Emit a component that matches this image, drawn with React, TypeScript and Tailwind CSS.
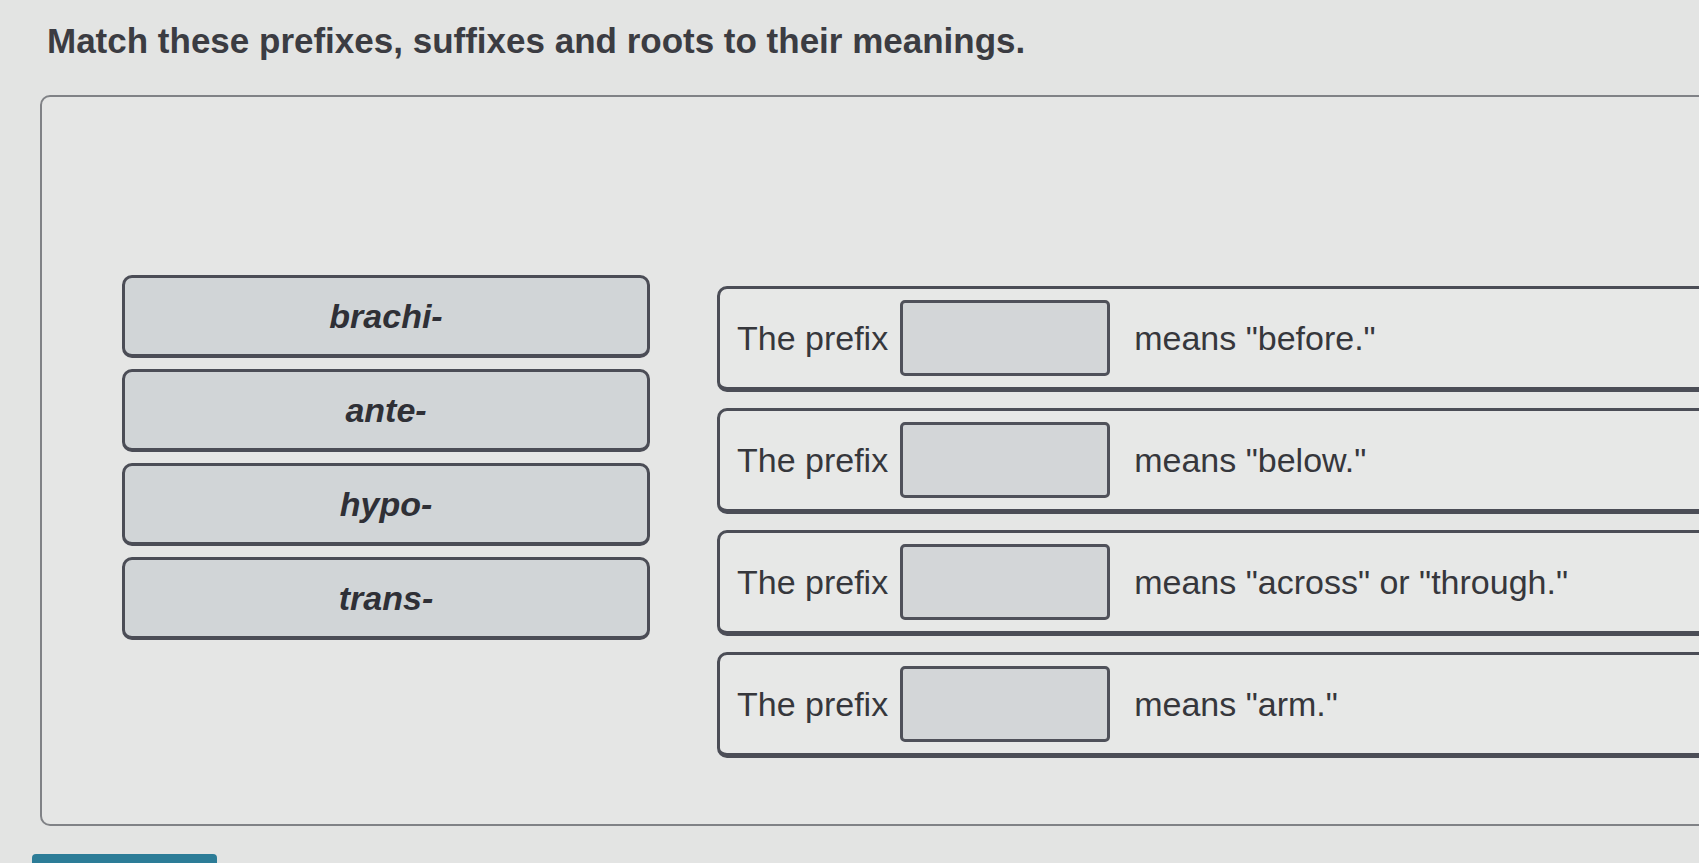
const prefixes = ["brachi-", "ante-", "hypo-", "trans-"];

const meanings = [
  'means "before."',
  'means "below."',
  'means "across" or "through."',
  'means "arm."',
];

const font = { fontFamily: '"Liberation Sans", Arial, sans-serif' };

const PrefixTile = ({ label }: { label: string }) => (
  <div className="flex h-[83px] w-[528px] items-center justify-center rounded-[10px] border-[3px] border-b-[4px] border-[#4b4d56] bg-[#d1d5d7]">
    <span className="text-[34px] font-bold italic leading-[38px] text-[#2f3036]">
      {label}
    </span>
  </div>
);

const Statement = ({ meaning }: { meaning: string }) => (
  <div className="flex h-[106px] w-[1100px] items-center rounded-[10px] border-[3px] border-b-[5px] border-[#4b4d56] bg-[#e7e8e7] pl-[17px]">
    <span className="text-[34px] leading-[38px] text-[#36373c]">The prefix</span>
    <div className="ml-[12px] h-[76px] w-[210px] rounded-[5px] border-[3px] border-[#4f515a] bg-[#d3d6d8]" />
    <span className="ml-[24px] text-[34px] leading-[38px] text-[#36373c]">
      {meaning}
    </span>
  </div>
);

export default function App() {
  return (
    <div
      className="h-[863px] w-[1699px] overflow-hidden bg-[#e3e4e3]"
      style={font}
    >
      <h1 className="pl-[47px] pt-[21px] text-[35px] font-bold leading-[39px] text-[#3b3c42]">
        Match these prefixes, suffixes and roots to their meanings.
      </h1>

      <div className="ml-[40px] mt-[35px] h-[731px] w-[1720px] rounded-[10px] border-2 border-[#808286] bg-[#e5e6e5]">
        <div className="flex pl-[80px] pt-[178px]">
          <div className="flex flex-col gap-[11px]">
            {prefixes.map((p) => (
              <PrefixTile key={p} label={p} />
            ))}
          </div>
          <div className="ml-[67px] mt-[11px] flex flex-col gap-[16px]">
            {meanings.map((m) => (
              <Statement key={m} meaning={m} />
            ))}
          </div>
        </div>
      </div>

      <div className="ml-[32px] mt-[28px] h-[20px] w-[185px] rounded-t-[4px] bg-[#2c7c97]" />
    </div>
  );
}
